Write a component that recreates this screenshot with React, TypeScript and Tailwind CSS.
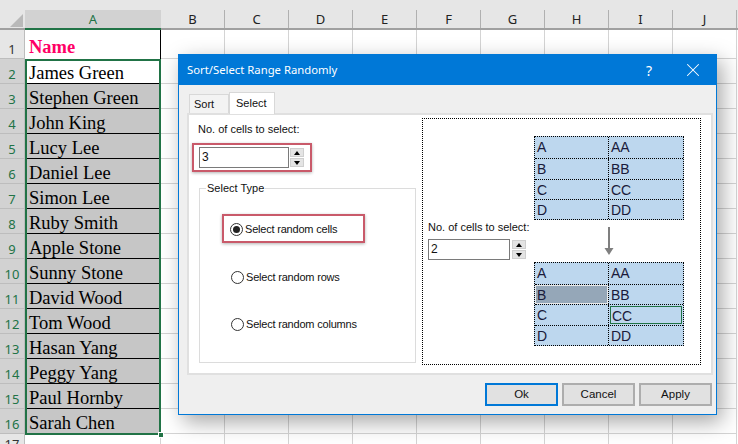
import React from 'react';
import { X } from 'lucide-react';

const names = [
  'James Green', 'Stephen Green', 'John King', 'Lucy Lee', 'Daniel Lee', 'Simon Lee', 'Ruby Smith', 'Apple Stone',
  'Sunny Stone', 'David Wood', 'Tom Wood', 'Hasan Yang', 'Peggy Yang', 'Paul Hornby', 'Sarah Chen',
];
const otherCols = ['B', 'C', 'D', 'E', 'F', 'G', 'H', 'I', 'J'];

function EmptyCells() {
  return (
    <>
      {otherCols.map((c) => (
        <div key={c} className="w-16 shrink-0 border-r border-b border-[#d4d4d4]" />
      ))}
    </>
  );
}

function Row({ num, cellClass, children, active = true, height = 'h-[25px]', numPad = 'pb-0' }: { num: number; cellClass: string; children?: React.ReactNode; active?: boolean; height?: string; numPad?: string }) {
  return (
    <div className={`flex ${height}`}>
      <div className={`w-[25px] shrink-0 border-r border-b border-[#bdbdbd] flex items-end justify-center text-[13px] leading-[18px] ${numPad} ${active ? 'bg-[#d2d2d2] text-[#217346]' : 'bg-[#e6e6e6] text-[#333]'}`}>
        {num}
      </div>
      <div className={`w-[136px] shrink-0 pl-[4px] font-["Liberation_Serif",serif] text-[18.5px] leading-[24px] whitespace-nowrap overflow-hidden ${cellClass}`}>
        {children}
      </div>
      <EmptyCells />
    </div>
  );
}

function Spinner() {
  return (
    <div className="flex flex-col gap-[1px] w-[14px]">
      <div className="h-[9px] bg-[#e4e4e4] border border-[#cfcfcf] flex items-center justify-center">
        <svg width="6" height="4" viewBox="0 0 6 4"><path d="M3 0l3 4H0z" fill="#000" /></svg>
      </div>
      <div className="h-[9px] bg-[#e4e4e4] border border-[#cfcfcf] flex items-center justify-center">
        <svg width="6" height="4" viewBox="0 0 6 4"><path d="M0 0h6L3 4z" fill="#000" /></svg>
      </div>
    </div>
  );
}

function Radio({ label, checked = false }: { label: string; checked?: boolean }) {
  return (
    <div className="flex items-center gap-[2px] text-[11px] leading-[15px] tracking-[-0.2px] text-[#111]">
      <div className="w-[13px] h-[13px] rounded-full border border-[#333] bg-white flex items-center justify-center">
        {checked && <div className="w-[7px] h-[7px] rounded-full bg-[#222]" />}
      </div>
      <span className="whitespace-nowrap">{label}</span>
    </div>
  );
}

function PreviewTable({ result = false, heights }: { result?: boolean; heights: string[] }) {
  const rows = [
    { a: 'A', b: 'AA' },
    { a: 'B', b: 'BB' },
    { a: 'C', b: 'CC' },
    { a: 'D', b: 'DD' },
  ];
  return (
    <div className="w-[150px] border border-dotted border-black bg-[#bdd7ee] text-[14px] leading-[21px] text-[#1a1a3a]">
      {rows.map((r, i) => (
        <div key={r.a} className={`flex ${heights[i]} ${i > 0 ? 'border-t border-dotted border-black' : ''}`}>
          <div className="w-[74px] border-r border-dotted border-black">
            {result && r.a === 'B' ? (
              <div className="h-full bg-[#95a7b8] border border-[#e8e8e8] pl-[1px] leading-[18px]">{r.a}</div>
            ) : (
              <div className="pl-[2px]">{r.a}</div>
            )}
          </div>
          <div className="flex-1">
            {result && r.a === 'C' ? (
              <div className="m-px h-[18px] border border-[#217346] pl-[1px] leading-[18px]">{r.b}</div>
            ) : (
              <div className="pl-[2px]">{r.b}</div>
            )}
          </div>
        </div>
      ))}
    </div>
  );
}

export default function App() {
  return (
    <div className='relative w-[738px] h-[444px] overflow-hidden bg-white font-["Noto_Sans",sans-serif]'>
      {/* Sheet */}
      <div className="h-[10px] bg-[#e6e6e6]" />
      <div className="flex h-[20px] bg-[#e6e6e6] border-b-2 border-[#a0a0a0] text-[13px] leading-[18px] text-[#222]">
        <div className="w-[25px] shrink-0 flex items-end justify-end pr-[2px] pb-[1px]">
          <svg width="13" height="13" viewBox="0 0 13 13"><path d="M13 0v13H0z" fill="#b9b9b9" /></svg>
        </div>
        <div className="w-[136px] shrink-0 bg-[#d2d2d2] text-center text-[#217346] border-b-2 border-[#217346] h-[20px]">A</div>
        {otherCols.map((c) => (
          <div key={c} className="w-16 shrink-0 text-center border-r border-[#b0b0b0]">{c}</div>
        ))}
      </div>
      <Row num={1} active={false} height="h-[29px]" cellClass="border-r border-black font-bold text-[#ff0066] pt-[5px]">Name</Row>
      {names.map((n, i) => (
        <Row key={n} num={i + 2} cellClass={`pt-[2px] text-black border-b border-black ${i === 0 ? 'bg-white' : 'bg-[#c6c6c6]'}`}>
          {n}
        </Row>
      ))}
      <Row num={17} active={false} numPad="pb-[5px]" cellClass="border-r border-b border-[#d4d4d4]" />

      {/* Selection outline */}
      <div className="absolute left-[25px] top-[59px] w-[136px] h-[376px] border-2 border-[#217346]" />
      <div className="absolute left-[158px] top-[432px] w-[6px] h-[6px] bg-[#217346] border border-white" />

      {/* Dialog */}
      <div className="absolute left-[178px] top-[54px] w-[539px] h-[361px] flex flex-col bg-[#efefef] border border-[#0078d7] shadow-[5px_7px_20px_rgba(0,0,0,0.35)]">
        <div className="h-[30px] shrink-0 bg-[#0078d7] text-white flex items-center pl-[8px] text-[11.3px]">
          <span className="flex-1">Sort/Select Range Randomly</span>
          <span className="text-[14px] mr-[30px]">?</span>
          <X size={22} strokeWidth={1.1} className="mr-[12px]" />
        </div>

        <div className='flex flex-col flex-1 font-["Liberation_Sans",sans-serif]'>
          {/* Tabs */}
          <div className="flex items-end h-[28px] pl-[10px] text-[11px] text-[#111] shrink-0">
            <div className="w-[40px] h-[19px] bg-[#f3f3f3] border border-b-0 border-[#d8d8d8] pl-[4px] leading-[19px]">Sort</div>
            <div className="w-[46px] h-[22px] bg-white border border-b-0 border-[#d8d8d8] pl-[6px] leading-[20px] -mb-[1px] z-10">Select</div>
          </div>

          <div className="flex ml-[8px] w-[526px] h-[262px] bg-white border-2 border-[#e0e0e0] text-[11px] leading-[15px] text-[#111]">
            {/* Left options */}
            <div className="w-[233px] shrink-0 flex flex-col">
              <div className="ml-[9px] mt-[7px]">No. of cells to select:</div>
              <div className="ml-[3px] mt-[6px] w-[120px] h-[29px] border-2 border-[#c95a6a] shadow-[0_1px_3px_rgba(0,0,0,0.3)] flex items-center gap-[1px] pl-[5px]">
                <div className="w-[90px] h-[21px] border border-[#7a7a7a] pl-[2px] leading-[19px] text-[12px]">3</div>
                <Spinner />
              </div>
              <fieldset className="ml-[10px] mt-[8px] w-[217px] h-[183px] border border-[#dcdcdc] flex flex-col">
                <legend className="ml-[6px] px-px pt-px">Select Type</legend>
                <div className="ml-[22px] mt-[18px] w-[143px] h-[29px] border-2 border-[#c95a6a] shadow-[0_1px_3px_rgba(0,0,0,0.3)] flex items-center pl-[6px] pt-[1px]">
                  <Radio label="Select random cells" checked />
                </div>
                <div className="ml-[31px] mt-[27px]"><Radio label="Select random rows" /></div>
                <div className="ml-[31px] mt-[32px]"><Radio label="Select random columns" /></div>
              </fieldset>
            </div>

            {/* Example */}
            <div className="mt-[3px] w-[279px] h-[247px] border border-dotted border-black flex">
              <div className="w-[111px] shrink-0 pl-[5px] pt-[101px]">
                <div className="whitespace-nowrap">No. of cells to select:</div>
                <div className="mt-[4px] flex items-center gap-[2px]">
                  <div className="w-[82px] h-[21px] border border-[#7a7a7a] pl-[2px] leading-[19px] text-[12px]">2</div>
                  <Spinner />
                </div>
              </div>
              <div className="pt-[17px] flex flex-col">
                <PreviewTable heights={['h-[21px]', 'h-[21px]', 'h-[20px]', 'h-[20px]']} />
                <div className="h-[42px] flex items-center justify-center pr-[1px]">
                  <svg width="10" height="30" viewBox="0 0 10 30">
                    <path d="M4 1h2v21h3.5L5 29 .5 22H4z" fill="#7f7f7f" />
                  </svg>
                </div>
                <PreviewTable result heights={['h-[21px]', 'h-[20px]', 'h-[21px]', 'h-[20px]']} />
              </div>
            </div>
          </div>

          {/* Footer */}
          <div className="flex justify-end gap-[4px] mt-[8px] mr-[4px] text-[11.5px] text-[#111]">
            <button className="w-[73px] h-[23px] bg-[#e1e1e1] border-2 border-[#0078d7]">Ok</button>
            <button className="w-[73px] h-[23px] bg-[#e1e1e1] border-2 border-[#adadad]">Cancel</button>
            <button className="w-[73px] h-[23px] bg-[#e1e1e1] border-2 border-[#adadad]">Apply</button>
          </div>
        </div>
      </div>
    </div>
  );
}
